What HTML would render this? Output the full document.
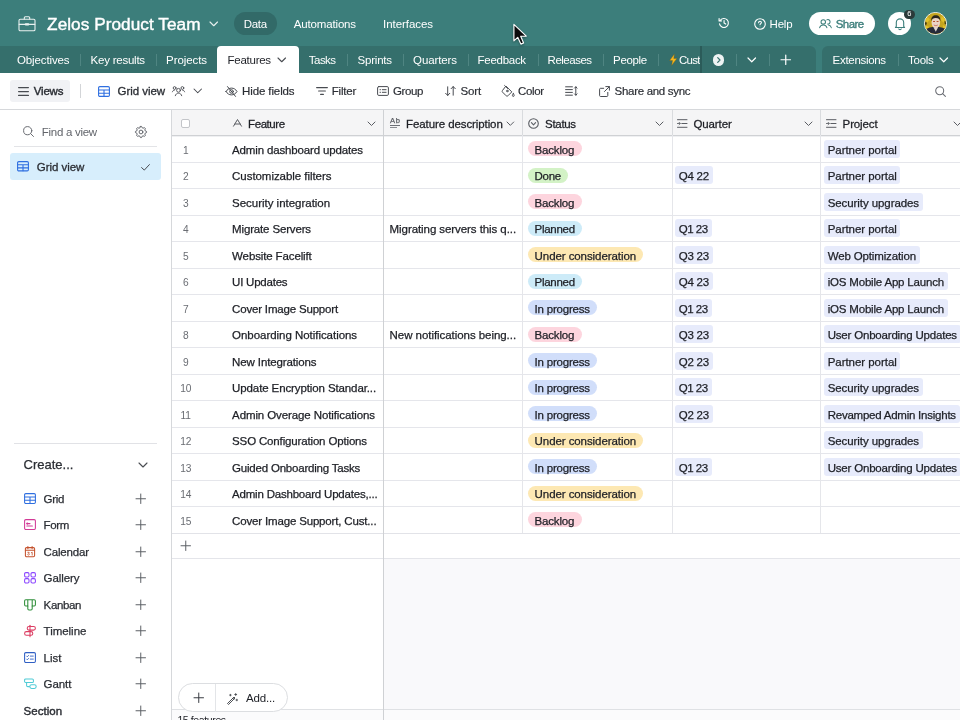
<!DOCTYPE html>
<html>
<head>
<meta charset="utf-8">
<title>Zelos Product Team - Features</title>
<style>
*{box-sizing:border-box;margin:0;padding:0}
html,body{width:960px;height:720px;overflow:hidden;background:#fff}
body{font-family:"Liberation Sans",sans-serif;font-size:11.5px;color:#1d1f25;position:relative}
.a{position:absolute;display:block}
.x{position:absolute;white-space:nowrap;font-family:"Liberation Sans",sans-serif}
svg{overflow:visible}
#w{position:absolute;left:0;top:0;width:960px;height:720px;overflow:hidden;will-change:transform;background:#fff}
</style>
</head>
<body>
<div id="w">

<!-- TOP BAR + TABS -->
<div class="a" style="left:0px;top:0px;width:960.00px;height:73.00px;background:#3c7e7b;"></div>
<div class="a" style="left:0px;top:46px;width:816.00px;height:27.00px;background:#356f6c;border-top-right-radius:6px;"></div>
<div class="a" style="left:822px;top:46px;width:138.00px;height:27.00px;background:#356f6c;border-top-left-radius:6px;"></div>
<svg class="a" style="left:17.5px;top:15px;" width="18" height="17" viewBox="0 0 18 17" fill="none" stroke="#e9f1f0" stroke-width="1.1" stroke-linecap="round" stroke-linejoin="round"><rect x="1" y="4.2" width="16" height="11.6" rx="1.3"/><path d="M6.300 4V2.700c0-.6.4-1 1-1h3.400c.6 0 1 .4 1 1V4"/><path d="M1.200 9.400h15.600"/><path d="M7.800 9.400h2.400" stroke-width="2.200"/></svg>
<div class="x" style="left:47.10px;top:16.11px;font-size:17.2px;line-height:16px;letter-spacing:0.051px;color:#ffffff;-webkit-text-stroke:0.4px #ffffff;">Zelos Product Team</div>
<svg class="a" style="left:210.25px;top:21.825px;" width="7.5" height="3.75" viewBox="0 0 7.5 3.75" fill="none" stroke="#e6eeed" stroke-width="1.15" stroke-linecap="round" stroke-linejoin="round"><path d="M0 0L3.75 3.75L7.5 0"/></svg>
<div class="a" style="left:234px;top:11.5px;width:43.00px;height:23.50px;background:#326a68;border-radius:12px;"></div>
<div class="x" style="left:243.80px;top:15.71px;font-size:11.5px;line-height:16px;letter-spacing:-0.330px;color:#ffffff;">Data</div>
<div class="x" style="left:293.80px;top:15.71px;font-size:11.5px;line-height:16px;letter-spacing:-0.162px;color:#ffffff;">Automations</div>
<div class="x" style="left:383.10px;top:15.71px;font-size:11.5px;line-height:16px;letter-spacing:-0.055px;color:#ffffff;">Interfaces</div>
<svg class="a" style="left:718.2px;top:17.3px;" width="11.8" height="11.8" viewBox="0 0 14 14" fill="none" stroke="#ffffff" stroke-width="1.35" stroke-linecap="round" stroke-linejoin="round"><path d="M2.500 4.300A5.300 5.300 0 1 1 1.800 8.200"/><path d="M1.300 1.800v2.800h2.800"/><path d="M7.200 4.300V7.200l2 1.200"/></svg>
<svg class="a" style="left:753.5px;top:17.5px;" width="12" height="12" viewBox="0 0 12 12" fill="none" stroke="#ffffff" stroke-width="1.1" stroke-linecap="round" stroke-linejoin="round"><circle cx="6" cy="6" r="5.300"/><path d="M4.600 4.700c0-.9.600-1.400 1.400-1.400s1.400.5 1.400 1.300c0 1-1.400 1.100-1.400 2.200"/><circle cx="6" cy="8.800" r=".4" fill="#fff" stroke="none"/></svg>
<div class="x" style="left:769.60px;top:15.71px;font-size:11.5px;line-height:16px;letter-spacing:-0.217px;color:#ffffff;">Help</div>
<div class="a" style="left:809px;top:11.5px;width:65.50px;height:23.50px;background:#ffffff;border-radius:12px;"></div>
<svg class="a" style="left:819px;top:18.7px;" width="13" height="9.5" viewBox="0 0 14 10" fill="none" stroke="#3c7e7b" stroke-width="1.1" stroke-linecap="round" stroke-linejoin="round"><circle cx="4.600" cy="3" r="2.400"/><path d="M.700 9.300c.5-1.900 2-3 3.900-3s3.400 1.100 3.900 3"/><path d="M8.400.8a2.400 2.400 0 1 1 .9 4.500"/><path d="M10.300 6.300c1.500.2 2.600 1.300 3 3"/></svg>
<div class="x" style="left:835.80px;top:15.71px;font-size:11.5px;line-height:16px;letter-spacing:-0.596px;color:#3c7e7b;-webkit-text-stroke:0.35px #3c7e7b;">Share</div>
<div class="a" style="left:887.5px;top:11.5px;width:23.50px;height:23.50px;background:#ffffff;border-radius:12px;"></div>
<svg class="a" style="left:893.5px;top:17px;" width="12" height="13" viewBox="0 0 12 13" fill="none" stroke="#3c7e7b" stroke-width="1.1" stroke-linecap="round" stroke-linejoin="round"><path d="M2.300 9.400V5.600a3.700 3.700 0 0 1 7.400 0v3.800l.9 1.100H1.400z"/><path d="M4.700 12c.3.400.8.600 1.300.600s1-.2 1.300-.6"/></svg>
<div class="a" style="left:903.5px;top:9.5px;width:11.00px;height:9.50px;background:#2b3a3a;border-radius:5px;"></div>
<div class="x" style="left:907.30px;top:6.43px;font-size:7.5px;line-height:16px;letter-spacing:-0.120px;color:#ffffff;">6</div>
<div class="a" style="left:923.7px;top:11.5px;width:23.6px;height:23.6px;border-radius:12px;overflow:hidden;border:1px solid #f1f4f3;background:#c4a31d"><svg width="21.6" height="21.6" viewBox="0 0 22 22" style="display:block"><rect width="22" height="22" fill="#c6a51f"/><path d="M0 6l3-2 2 3-3 3zM17 3l4 3-2 4-3-3zM1 13l3 1-1 3-3-1zM18 12l3 2-2 3z" fill="#e0c12a"/><path d="M0 9l2 1-1 3-1-1zM20 8l2 1v3l-2-1z" fill="#3a3413"/><path d="M0 17c3-2 6-3 11-3s8 1 11 3v5H0z" fill="#262b3a"/><path d="M8.600 14.500h4.800l-2.400 4.500z" fill="#ddd5cf"/><ellipse cx="11" cy="9.700" rx="4.300" ry="5.600" fill="#ead3c6"/><path d="M6.300 8.500C6 4.200 8.200 2.300 11 2.300s5 1.900 4.700 6.200c-.5-2.300-1.900-3.300-4.700-3.300s-4.200 1-4.700 3.300z" fill="#2b241c"/><path d="M8.200 8.700h2M11.800 8.700h2" stroke="#b5522d" stroke-width="1.100"/><path d="M9 12.200c1.300.9 2.700.9 4 0" stroke="#c46a5a" stroke-width=".9" fill="none"/></svg></div>
<div class="x" style="left:16.90px;top:51.81px;font-size:11.5px;line-height:16px;letter-spacing:-0.109px;color:#ffffff;">Objectives</div>
<div class="a" style="left:80px;top:53.5px;width:1.00px;height:12.50px;background:#4f8582;"></div>
<div class="x" style="left:90.60px;top:51.81px;font-size:11.5px;line-height:16px;letter-spacing:-0.238px;color:#ffffff;">Key results</div>
<div class="a" style="left:155.5px;top:53.5px;width:1.00px;height:12.50px;background:#4f8582;"></div>
<div class="x" style="left:166.10px;top:51.81px;font-size:11.5px;line-height:16px;letter-spacing:-0.077px;color:#ffffff;">Projects</div>
<div class="a" style="left:217px;top:46px;width:81.50px;height:27.00px;background:#ffffff;border-radius:4px 4px 0 0;"></div>
<div class="x" style="left:227.60px;top:51.81px;font-size:11.5px;line-height:16px;letter-spacing:-0.268px;color:#1d1f25;">Features</div>
<svg class="a" style="left:277.95px;top:58.125px;" width="7.5" height="3.75" viewBox="0 0 7.5 3.75" fill="none" stroke="#4a4d52" stroke-width="1.1" stroke-linecap="round" stroke-linejoin="round"><path d="M0 0L3.75 3.75L7.5 0"/></svg>
<div class="x" style="left:308.80px;top:51.81px;font-size:11.5px;line-height:16px;letter-spacing:-0.524px;color:#ffffff;">Tasks</div>
<div class="a" style="left:347px;top:53.5px;width:1.00px;height:12.50px;background:#4f8582;"></div>
<div class="x" style="left:357.60px;top:51.81px;font-size:11.5px;line-height:16px;letter-spacing:-0.215px;color:#ffffff;">Sprints</div>
<div class="a" style="left:403px;top:53.5px;width:1.00px;height:12.50px;background:#4f8582;"></div>
<div class="x" style="left:413.10px;top:51.81px;font-size:11.5px;line-height:16px;letter-spacing:-0.105px;color:#ffffff;">Quarters</div>
<div class="a" style="left:468px;top:53.5px;width:1.00px;height:12.50px;background:#4f8582;"></div>
<div class="x" style="left:477.60px;top:51.81px;font-size:11.5px;line-height:16px;letter-spacing:-0.286px;color:#ffffff;">Feedback</div>
<div class="a" style="left:538px;top:53.5px;width:1.00px;height:12.50px;background:#4f8582;"></div>
<div class="x" style="left:547.60px;top:51.81px;font-size:11.5px;line-height:16px;letter-spacing:-0.492px;color:#ffffff;">Releases</div>
<div class="a" style="left:602.5px;top:53.5px;width:1.00px;height:12.50px;background:#4f8582;"></div>
<div class="x" style="left:613.10px;top:51.81px;font-size:11.5px;line-height:16px;letter-spacing:-0.361px;color:#ffffff;">People</div>
<div class="a" style="left:657.5px;top:53.5px;width:1.00px;height:12.50px;background:#4f8582;"></div>
<svg class="a" style="left:669px;top:54.2px;" width="8.5" height="11.5" viewBox="0 0 9 12" fill="none" ><path d="M5.700 0L.6 6.900h3.100L2.800 12l5.600-7.400H5.100z" fill="#f7b71d" stroke="#6b5a1e" stroke-width=".4"/></svg>
<div class="x" style="left:678.90px;top:51.81px;font-size:11.5px;line-height:16px;letter-spacing:-0.715px;color:#ffffff;">Cust</div>
<div class="a" style="left:700px;top:46px;width:1.50px;height:27.00px;background:#2b5b59;"></div>
<div class="a" style="left:712.5px;top:54px;width:11.50px;height:11.50px;background:#eef3f3;border-radius:6px;"></div>
<svg class="a" style="left:716.7px;top:57px;" width="4" height="6" viewBox="0 0 4 6" fill="none" stroke="#356f6c" stroke-width="1.2" stroke-linecap="round" stroke-linejoin="round"><path d="M.7.700L3 3 .7 5.300"/></svg>
<div class="a" style="left:735.5px;top:53.5px;width:1.00px;height:12.50px;background:#4f8582;"></div>
<svg class="a" style="left:748.45px;top:58.125px;" width="7.5" height="3.75" viewBox="0 0 7.5 3.75" fill="none" stroke="#ffffff" stroke-width="1.2" stroke-linecap="round" stroke-linejoin="round"><path d="M0 0L3.75 3.75L7.5 0"/></svg>
<div class="a" style="left:769px;top:53.5px;width:1.00px;height:12.50px;background:#4f8582;"></div>
<svg class="a" style="left:781.25px;top:54.95px;" width="9.5" height="9.5" viewBox="0 0 9.5 9.5" fill="none" stroke="#ffffff" stroke-width="1.2" stroke-linecap="round" stroke-linejoin="round"><path d="M4.75 0V9.5M0 4.75H9.5"/></svg>
<div class="x" style="left:832.60px;top:51.81px;font-size:11.5px;line-height:16px;letter-spacing:-0.306px;color:#ffffff;">Extensions</div>
<div class="a" style="left:897.5px;top:53.5px;width:1.00px;height:12.50px;background:#4f8582;"></div>
<div class="x" style="left:908.10px;top:51.81px;font-size:11.5px;line-height:16px;letter-spacing:-0.286px;color:#ffffff;">Tools</div>
<svg class="a" style="left:939.95px;top:58.125px;" width="7.5" height="3.75" viewBox="0 0 7.5 3.75" fill="none" stroke="#ffffff" stroke-width="1.2" stroke-linecap="round" stroke-linejoin="round"><path d="M0 0L3.75 3.75L7.5 0"/></svg>
<svg class="a" style="left:513.4px;top:23.2px;filter:drop-shadow(0 1px 1px rgba(0,0,0,.35));" width="15" height="23" viewBox="0 0 15 23" fill="none" ><path d="M.9 1.300L.9 17.800L4.700 14.300L7.900 21.100L10.600 19.900L7.700 13.300L13.300 13.100z" fill="#0b0b0c" stroke="#ffffff" stroke-width="1.150" stroke-linejoin="round"/></svg>
<!-- TOOLBAR -->
<div class="a" style="left:0px;top:73px;width:960.00px;height:36.00px;background:#ffffff;"></div>
<div class="a" style="left:0px;top:109px;width:960.00px;height:1.00px;background:#d6d8db;"></div>
<div class="a" style="left:10px;top:80px;width:60.00px;height:22.00px;background:#f1f2f5;border-radius:3px;"></div>
<svg class="a" style="left:18px;top:86.5px;" width="11" height="9" viewBox="0 0 11 9" fill="none" stroke="#484b51" stroke-width="1.25" stroke-linecap="round" stroke-linejoin="round"><path d="M.6.600h9.800M.6 4.500h9.800M.6 8.400h9.800"/></svg>
<div class="x" style="left:33.80px;top:83.21px;font-size:11.5px;line-height:16px;letter-spacing:-0.217px;color:#2b2e34;-webkit-text-stroke:0.4px #2b2e34;">Views</div>
<div class="a" style="left:80px;top:84px;width:1.00px;height:14.00px;background:#d3d5d8;"></div>
<svg class="a" style="left:98px;top:85.5px;" width="12" height="11" viewBox="0 0 12 11" fill="none" stroke="#2f6fe0" stroke-width="1.1" stroke-linecap="round" stroke-linejoin="round"><rect x=".6" y=".6" width="10.800" height="9.800" rx="1.200"/><path d="M.6 4h10.800M.6 7.200h10.800M6 4v6.400"/></svg>
<div class="x" style="left:117.60px;top:83.21px;font-size:11.5px;line-height:16px;letter-spacing:-0.053px;color:#2b2e34;-webkit-text-stroke:0.3px #2b2e34;">Grid view</div>
<svg class="a" style="left:172px;top:86px;" width="13" height="10" viewBox="0 0 13 10" fill="none" stroke="#484b51" stroke-width="0.9" stroke-linecap="round" stroke-linejoin="round"><circle cx="6.500" cy="4.300" r="1.900"/><path d="M3.300 9.700c.4-1.600 1.600-2.500 3.200-2.500s2.800.9 3.200 2.500"/><circle cx="2.600" cy="2" r="1.400"/><path d="M.4 5.800c.3-1 1-1.600 2-1.700"/><circle cx="10.400" cy="2" r="1.400"/><path d="M12.600 5.800c-.3-1-1-1.600-2-1.700"/></svg>
<svg class="a" style="left:194.25px;top:89.425px;" width="7.5" height="3.75" viewBox="0 0 7.5 3.75" fill="none" stroke="#484b51" stroke-width="1.05" stroke-linecap="round" stroke-linejoin="round"><path d="M0 0L3.75 3.75L7.5 0"/></svg>
<svg class="a" style="left:225px;top:85.5px;" width="13" height="11" viewBox="0 0 13 11" fill="none" stroke="#484b51" stroke-width="1.0" stroke-linecap="round" stroke-linejoin="round"><path d="M1 5.500C2.300 3.300 4.200 2.100 6.500 2.100S10.700 3.300 12 5.500C10.700 7.700 8.800 8.900 6.500 8.900S2.300 7.700 1 5.500z"/><circle cx="6.500" cy="5.500" r="1.800"/><path d="M2.500.600l8 9.800"/></svg>
<div class="x" style="left:242.10px;top:83.21px;font-size:11.5px;line-height:16px;letter-spacing:-0.119px;color:#2b2e34;-webkit-text-stroke:0.18px #2b2e34;">Hide fields</div>
<svg class="a" style="left:315.5px;top:87px;" width="12" height="8" viewBox="0 0 12 8" fill="none" stroke="#484b51" stroke-width="1.1" stroke-linecap="round" stroke-linejoin="round"><path d="M.6.600h10.800M2.600 4h6.800M4.600 7.400h2.800"/></svg>
<div class="x" style="left:331.80px;top:83.21px;font-size:11.5px;line-height:16px;letter-spacing:-0.211px;color:#2b2e34;-webkit-text-stroke:0.18px #2b2e34;">Filter</div>
<svg class="a" style="left:377px;top:86px;" width="12" height="10" viewBox="0 0 12 10" fill="none" stroke="#484b51" stroke-width="1.0" stroke-linecap="round" stroke-linejoin="round"><rect x=".6" y=".6" width="10.800" height="8.800" rx="1.200"/><path d="M3 3.700h.5M5.300 3.700h3.800M3 6.300h.5M5.300 6.300h3.800"/></svg>
<div class="x" style="left:393.10px;top:83.21px;font-size:11.5px;line-height:16px;letter-spacing:-0.440px;color:#2b2e34;-webkit-text-stroke:0.18px #2b2e34;">Group</div>
<svg class="a" style="left:445px;top:86px;" width="11" height="10" viewBox="0 0 11 10" fill="none" stroke="#484b51" stroke-width="1.0" stroke-linecap="round" stroke-linejoin="round"><path d="M2.700 9.400V.8M.6 7.300l2.100 2.100 2.100-2.100M8.200.600v8.600M6.100 2.700L8.200.6l2.100 2.100"/></svg>
<div class="x" style="left:460.60px;top:83.21px;font-size:11.5px;line-height:16px;letter-spacing:-0.197px;color:#2b2e34;-webkit-text-stroke:0.18px #2b2e34;">Sort</div>
<svg class="a" style="left:501px;top:85px;" width="14" height="12" viewBox="0 0 14 12" fill="none" stroke="#484b51" stroke-width="1.0" stroke-linecap="round" stroke-linejoin="round"><path d="M5.200 1.300l5.600 5.600-3.900 3.900c-.5.500-1.200.5-1.700 0L1.500 7.100c-.5-.5-.5-1.200 0-1.700z"/><path d="M3.600.500l3 3"/><circle cx="6.300" cy="6" r=".8"/><path d="M12.300 8.600c.6.900.9 1.500.9 1.900a.9.900 0 0 1-1.800 0c0-.4.300-1 .9-1.900z"/></svg>
<div class="x" style="left:518.10px;top:83.21px;font-size:11.5px;line-height:16px;letter-spacing:-0.370px;color:#2b2e34;-webkit-text-stroke:0.18px #2b2e34;">Color</div>
<svg class="a" style="left:565px;top:86px;" width="13" height="10" viewBox="0 0 13 10" fill="none" stroke="#484b51" stroke-width="1.0" stroke-linecap="round" stroke-linejoin="round"><path d="M.6.800h6.800M.6 3.600h6.800M.6 6.400h6.800M.6 9.200h6.800"/><path d="M10.800.800v8.400M9.500 2.100L10.800.8l1.300 1.300M9.500 7.900l1.300 1.300 1.300-1.300"/></svg>
<svg class="a" style="left:598.5px;top:85.5px;" width="11" height="11" viewBox="0 0 11 11" fill="none" stroke="#484b51" stroke-width="1.0" stroke-linecap="round" stroke-linejoin="round"><path d="M8.800 6.400v3.200c0 .5-.4.900-.9.900H1.500c-.5 0-.9-.4-.9-.9V3.200c0-.5.400-.9.900-.9h3.200"/><path d="M6.800.600h3.600v3.600M10.300.7L5.500 5.500"/></svg>
<div class="x" style="left:614.60px;top:83.21px;font-size:11.5px;line-height:16px;letter-spacing:-0.300px;color:#2b2e34;-webkit-text-stroke:0.18px #2b2e34;">Share and sync</div>
<svg class="a" style="left:935.3px;top:85.8px;" width="11" height="11" viewBox="0 0 11 11" fill="none" stroke="#6a6d73" stroke-width="1.05" stroke-linecap="round" stroke-linejoin="round"><circle cx="4.700" cy="4.700" r="4"/><path d="M7.600 7.600l2.800 2.800"/></svg>
<!-- SIDEBAR -->
<div class="a" style="left:0px;top:110px;width:171.00px;height:610.00px;background:#ffffff;"></div>
<div class="a" style="left:171px;top:110px;width:1.00px;height:610.00px;background:#d6d8db;"></div>
<svg class="a" style="left:22.6px;top:125.8px;" width="11" height="11" viewBox="0 0 11 11" fill="none" stroke="#6a6d73" stroke-width="1.0" stroke-linecap="round" stroke-linejoin="round"><circle cx="4.700" cy="4.700" r="4.100"/><path d="M7.700 7.700l2.800 2.800"/></svg>
<div class="x" style="left:41.80px;top:124.21px;font-size:11.5px;line-height:16px;letter-spacing:-0.286px;color:#62656b;">Find a view</div>
<svg class="a" style="left:135.2px;top:125.6px;" width="12" height="12" viewBox="0 0 12 12" fill="none" stroke="#5d6066" stroke-width="0.95" stroke-linecap="round" stroke-linejoin="round"><path d="M5.45 0.43L6.55 0.43L7.25 1.89L8.03 2.21L9.55 1.67L10.33 2.45L9.79 3.97L10.11 4.75L11.57 5.45L11.57 6.55L10.11 7.25L9.79 8.03L10.33 9.55L9.55 10.33L8.03 9.79L7.25 10.11L6.55 11.57L5.45 11.57L4.75 10.11L3.97 9.79L2.45 10.33L1.67 9.55L2.21 8.03L1.89 7.25L0.43 6.55L0.43 5.45L1.89 4.75L2.21 3.97L1.67 2.45L2.45 1.67L3.97 2.21L4.75 1.89z"/><circle cx="6" cy="6" r="1.900"/></svg>
<div class="a" style="left:13.5px;top:145.5px;width:143.50px;height:1.00px;background:#e3e4e7;"></div>
<div class="a" style="left:10px;top:153px;width:150.50px;height:26.60px;background:#d7eefc;border-radius:3px;"></div>
<svg class="a" style="left:17px;top:161px;" width="12" height="10.5" viewBox="0 0 12 10.5" fill="none" stroke="#2f6fe0" stroke-width="1.1" stroke-linecap="round" stroke-linejoin="round"><rect x=".6" y=".6" width="10.800" height="9.300" rx="1.200"/><path d="M.6 3.800h10.800M.6 6.900h10.800M6 3.800v6"/></svg>
<div class="x" style="left:36.80px;top:158.71px;font-size:11.5px;line-height:16px;letter-spacing:-0.041px;color:#2b2e34;-webkit-text-stroke:0.3px #2b2e34;">Grid view</div>
<svg class="a" style="left:140.5px;top:163.5px;" width="9" height="6.5" viewBox="0 0 9 6.5" fill="none" stroke="#4a4d52" stroke-width="1.0" stroke-linecap="round" stroke-linejoin="round"><path d="M.6 3.600l2.700 2.500L8.400.6"/></svg>
<div class="a" style="left:13.5px;top:443px;width:143.50px;height:1.00px;background:#e1e2e6;"></div>
<div class="x" style="left:23.50px;top:457.23px;font-size:13px;line-height:16px;letter-spacing:0.006px;color:#2b2e34;-webkit-text-stroke:0.25px #2b2e34;">Create...</div>
<svg class="a" style="left:138.5px;top:462.5px;" width="8" height="4.0" viewBox="0 0 8 4.0" fill="none" stroke="#4a4d52" stroke-width="1.1" stroke-linecap="round" stroke-linejoin="round"><path d="M0 0L4.0 4.0L8 0"/></svg>
<svg class="a" style="left:24px;top:492.8px;" width="12" height="11.5" viewBox="0 0 12 11.5" fill="none" stroke="#2f6fe0" stroke-width="1.05" stroke-linecap="round" stroke-linejoin="round"><rect x=".6" y=".6" width="10.800" height="9.800" rx="1.200"/><path d="M.6 4h10.800M.6 7.200h10.800M6 4v6.400"/></svg>
<div class="x" style="left:43.60px;top:490.71px;font-size:11.5px;line-height:16px;letter-spacing:-0.308px;color:#2b2e34;-webkit-text-stroke:0.25px #2b2e34;">Grid</div>
<svg class="a" style="left:135.75px;top:493.75px;" width="9.5" height="9.5" viewBox="0 0 9.5 9.5" fill="none" stroke="#5d6066" stroke-width="1.0" stroke-linecap="round" stroke-linejoin="round"><path d="M4.75 0V9.5M0 4.75H9.5"/></svg>
<svg class="a" style="left:24px;top:519.3px;" width="12" height="11.5" viewBox="0 0 12 11.5" fill="none" stroke="#d23a96" stroke-width="1.05" stroke-linecap="round" stroke-linejoin="round"><rect x=".6" y=".6" width="10.800" height="9.800" rx="1.200"/><path d="M2.800 4.600h3.200M2.800 7h5.600"/><circle cx="3.300" cy="4.600" r=".5"/></svg>
<div class="x" style="left:43.60px;top:517.21px;font-size:11.5px;line-height:16px;letter-spacing:-0.342px;color:#2b2e34;-webkit-text-stroke:0.25px #2b2e34;">Form</div>
<svg class="a" style="left:135.75px;top:520.25px;" width="9.5" height="9.5" viewBox="0 0 9.5 9.5" fill="none" stroke="#5d6066" stroke-width="1.0" stroke-linecap="round" stroke-linejoin="round"><path d="M4.75 0V9.5M0 4.75H9.5"/></svg>
<svg class="a" style="left:24px;top:545.8px;" width="12" height="11.5" viewBox="0 0 12 11.5" fill="none" stroke="#c4522d" stroke-width="1.05" stroke-linecap="round" stroke-linejoin="round"><rect x="1.400" y="1.600" width="9.200" height="9.200" rx="1.200"/><path d="M1.400 4.200h9.200M3.900.4v2.200M8.100.4v2.200"/><path d="M3.800 6.300h1.400l-.8 1c.7 0 1 .4 1 .9 0 .6-.5.900-1 .9-.4 0-.7-.1-.9-.4M7.300 6.700l.9-.5v2.900" stroke-width=".8"/></svg>
<div class="x" style="left:43.60px;top:543.71px;font-size:11.5px;line-height:16px;letter-spacing:-0.166px;color:#2b2e34;-webkit-text-stroke:0.25px #2b2e34;">Calendar</div>
<svg class="a" style="left:135.75px;top:546.75px;" width="9.5" height="9.5" viewBox="0 0 9.5 9.5" fill="none" stroke="#5d6066" stroke-width="1.0" stroke-linecap="round" stroke-linejoin="round"><path d="M4.75 0V9.5M0 4.75H9.5"/></svg>
<svg class="a" style="left:24px;top:572.3px;" width="12" height="11.5" viewBox="0 0 12 11.5" fill="none" stroke="#8b46ff" stroke-width="1.05" stroke-linecap="round" stroke-linejoin="round"><rect x=".6" y=".6" width="4.400" height="4.400" rx="1.300"/><rect x="7" y=".6" width="4.400" height="4.400" rx="1.300"/><rect x=".6" y="6.600" width="4.400" height="4.400" rx="1.300"/><rect x="7" y="6.600" width="4.400" height="4.400" rx="1.300"/></svg>
<div class="x" style="left:43.60px;top:570.21px;font-size:11.5px;line-height:16px;letter-spacing:-0.104px;color:#2b2e34;-webkit-text-stroke:0.25px #2b2e34;">Gallery</div>
<svg class="a" style="left:135.75px;top:573.25px;" width="9.5" height="9.5" viewBox="0 0 9.5 9.5" fill="none" stroke="#5d6066" stroke-width="1.0" stroke-linecap="round" stroke-linejoin="round"><path d="M4.75 0V9.5M0 4.75H9.5"/></svg>
<svg class="a" style="left:24px;top:598.8px;" width="12" height="11.5" viewBox="0 0 12 11.5" fill="none" stroke="#2f8f3a" stroke-width="1.05" stroke-linecap="round" stroke-linejoin="round"><path d="M1.800.8h8.400c.7 0 1.200.5 1.200 1.200v3.800c0 .7-.5 1.200-1.200 1.200H8.200V.8M3.800.8V7H1.800C1.100 7 .6 6.500.6 5.800V2C.6 1.300 1.100.8 1.800.8z"/><path d="M3.800 7v2.800c0 .7.5 1.200 1.200 1.200h2c.7 0 1.200-.5 1.200-1.200V7"/></svg>
<div class="x" style="left:43.60px;top:596.71px;font-size:11.5px;line-height:16px;letter-spacing:-0.369px;color:#2b2e34;-webkit-text-stroke:0.25px #2b2e34;">Kanban</div>
<svg class="a" style="left:135.75px;top:599.75px;" width="9.5" height="9.5" viewBox="0 0 9.5 9.5" fill="none" stroke="#5d6066" stroke-width="1.0" stroke-linecap="round" stroke-linejoin="round"><path d="M4.75 0V9.5M0 4.75H9.5"/></svg>
<svg class="a" style="left:24px;top:625.3px;" width="12" height="11.5" viewBox="0 0 12 11.5" fill="none" stroke="#dc3d62" stroke-width="1.05" stroke-linecap="round" stroke-linejoin="round"><path d="M6 .3v11.400"/><rect x="3.200" y="1.500" width="8.200" height="3.600" rx="1.800"/><rect x=".6" y="6.600" width="8.200" height="3.600" rx="1.800"/></svg>
<div class="x" style="left:43.60px;top:623.21px;font-size:11.5px;line-height:16px;letter-spacing:-0.033px;color:#2b2e34;-webkit-text-stroke:0.25px #2b2e34;">Timeline</div>
<svg class="a" style="left:135.75px;top:626.25px;" width="9.5" height="9.5" viewBox="0 0 9.5 9.5" fill="none" stroke="#5d6066" stroke-width="1.0" stroke-linecap="round" stroke-linejoin="round"><path d="M4.75 0V9.5M0 4.75H9.5"/></svg>
<svg class="a" style="left:24px;top:651.8px;" width="12" height="11.5" viewBox="0 0 12 11.5" fill="none" stroke="#2f5fc4" stroke-width="1.05" stroke-linecap="round" stroke-linejoin="round"><rect x=".6" y=".6" width="10.800" height="9.800" rx="1.200"/><path d="M2.600 4.100l.7.700 1.200-1.300M6.300 4.100h3M2.600 7.100l.7.700 1.200-1.300M6.300 7.100h3" stroke-width=".9"/></svg>
<div class="x" style="left:43.60px;top:649.71px;font-size:11.5px;line-height:16px;letter-spacing:-0.032px;color:#2b2e34;-webkit-text-stroke:0.25px #2b2e34;">List</div>
<svg class="a" style="left:135.75px;top:652.75px;" width="9.5" height="9.5" viewBox="0 0 9.5 9.5" fill="none" stroke="#5d6066" stroke-width="1.0" stroke-linecap="round" stroke-linejoin="round"><path d="M4.75 0V9.5M0 4.75H9.5"/></svg>
<svg class="a" style="left:24px;top:678.3px;" width="12" height="11.5" viewBox="0 0 12 11.5" fill="none" stroke="#4fcbd6" stroke-width="1.05" stroke-linecap="round" stroke-linejoin="round"><rect x=".6" y=".9" width="8.800" height="3.600" rx="1.100"/><rect x="5.800" y="6.800" width="6.400" height="3.600" rx="1.800"/><path d="M2.600 4.500v2.900c0 .7.500 1.200 1.200 1.200h1.600"/></svg>
<div class="x" style="left:43.60px;top:676.21px;font-size:11.5px;line-height:16px;letter-spacing:-0.081px;color:#2b2e34;-webkit-text-stroke:0.25px #2b2e34;">Gantt</div>
<svg class="a" style="left:135.75px;top:679.25px;" width="9.5" height="9.5" viewBox="0 0 9.5 9.5" fill="none" stroke="#5d6066" stroke-width="1.0" stroke-linecap="round" stroke-linejoin="round"><path d="M4.75 0V9.5M0 4.75H9.5"/></svg>
<div class="x" style="left:23.50px;top:702.71px;font-size:11.5px;line-height:16px;letter-spacing:0.041px;color:#2b2e34;-webkit-text-stroke:0.4px #2b2e34;">Section</div>
<svg class="a" style="left:135.75px;top:705.75px;" width="9.5" height="9.5" viewBox="0 0 9.5 9.5" fill="none" stroke="#5d6066" stroke-width="1.0" stroke-linecap="round" stroke-linejoin="round"><path d="M4.75 0V9.5M0 4.75H9.5"/></svg>
<!-- GRID -->
<div class="a" style="left:172px;top:110px;width:788.00px;height:610.00px;background:#f9f9fb;"></div>
<div class="a" style="left:172px;top:110px;width:211.00px;height:610.00px;background:#ffffff;"></div>
<div class="a" style="left:172px;top:110px;width:788.00px;height:25.00px;background:#f5f5f6;"></div>
<div class="a" style="left:172px;top:135px;width:788.00px;height:423.00px;background:#ffffff;"></div>
<div class="a" style="left:172px;top:135px;width:788.00px;height:1.00px;background:#cfd1d4;"></div>
<div class="a" style="left:172px;top:136px;width:788.00px;height:1.00px;background:#eff0f2;"></div>
<div class="a" style="left:172px;top:162px;width:788.00px;height:1.00px;background:#e5e6eb;"></div>
<div class="a" style="left:172px;top:188px;width:788.00px;height:1.00px;background:#e5e6eb;"></div>
<div class="a" style="left:172px;top:215px;width:788.00px;height:1.00px;background:#e5e6eb;"></div>
<div class="a" style="left:172px;top:241px;width:788.00px;height:1.00px;background:#e5e6eb;"></div>
<div class="a" style="left:172px;top:268px;width:788.00px;height:1.00px;background:#e5e6eb;"></div>
<div class="a" style="left:172px;top:294px;width:788.00px;height:1.00px;background:#e5e6eb;"></div>
<div class="a" style="left:172px;top:321px;width:788.00px;height:1.00px;background:#e5e6eb;"></div>
<div class="a" style="left:172px;top:347px;width:788.00px;height:1.00px;background:#e5e6eb;"></div>
<div class="a" style="left:172px;top:374px;width:788.00px;height:1.00px;background:#e5e6eb;"></div>
<div class="a" style="left:172px;top:400px;width:788.00px;height:1.00px;background:#e5e6eb;"></div>
<div class="a" style="left:172px;top:427px;width:788.00px;height:1.00px;background:#e5e6eb;"></div>
<div class="a" style="left:172px;top:453px;width:788.00px;height:1.00px;background:#e5e6eb;"></div>
<div class="a" style="left:172px;top:480px;width:788.00px;height:1.00px;background:#e5e6eb;"></div>
<div class="a" style="left:172px;top:506px;width:788.00px;height:1.00px;background:#e5e6eb;"></div>
<div class="a" style="left:172px;top:533px;width:788.00px;height:1.00px;background:#e5e6eb;"></div>
<div class="a" style="left:172px;top:533px;width:788.00px;height:1.00px;background:#e2e3e8;"></div>
<div class="a" style="left:172px;top:558px;width:788.00px;height:1.00px;background:#e4e5ea;"></div>
<div class="a" style="left:383px;top:110px;width:1.00px;height:610.00px;background:#cfd1d4;"></div>
<div class="a" style="left:522px;top:110px;width:1.00px;height:423.00px;background:#e5e6ea;"></div>
<div class="a" style="left:522px;top:110px;width:1.00px;height:25.00px;background:#d9dbde;"></div>
<div class="a" style="left:672px;top:110px;width:1.00px;height:423.00px;background:#e5e6ea;"></div>
<div class="a" style="left:672px;top:110px;width:1.00px;height:25.00px;background:#d9dbde;"></div>
<div class="a" style="left:820px;top:110px;width:1.00px;height:423.00px;background:#e5e6ea;"></div>
<div class="a" style="left:820px;top:110px;width:1.00px;height:25.00px;background:#d9dbde;"></div>
<div class="a" style="left:180.5px;top:118.7px;width:9.30px;height:9.00px;background:#ffffff;border-radius:2px;border:1px solid #c3c5c9;"></div>
<svg class="a" style="left:233px;top:119.3px;" width="9" height="7.5" viewBox="0 0 9 7.5" fill="none" stroke="#5a5d63" stroke-width="1.0" stroke-linecap="round" stroke-linejoin="round"><path d="M.5 7.200L4.500.5l4 6.700M1.900 5h5.200"/></svg>
<div class="x" style="left:248.10px;top:115.51px;font-size:11.5px;line-height:16px;letter-spacing:-0.438px;color:#1d1f25;-webkit-text-stroke:0.26px #1d1f25;">Feature</div>
<svg class="a" style="left:368.2px;top:121.75px;" width="7" height="3.5" viewBox="0 0 7 3.5" fill="none" stroke="#5a5d63" stroke-width="1.0" stroke-linecap="round" stroke-linejoin="round"><path d="M0 0L3.5 3.5L7 0"/></svg>
<div class="x" style="left:390.00px;top:113.14px;font-size:7.6px;line-height:16px;letter-spacing:0.600px;color:#5a5d63;-webkit-text-stroke:0.25px #5a5d63;">Ab</div>
<div class="a" style="left:389.8px;top:124.6px;width:10.40px;height:1.20px;background:#6d7076;"></div>
<div class="a" style="left:389.8px;top:126.7px;width:7.50px;height:0.90px;background:#8a8d92;"></div>
<div class="x" style="left:406.10px;top:115.51px;font-size:11.5px;line-height:16px;letter-spacing:-0.096px;color:#1d1f25;-webkit-text-stroke:0.26px #1d1f25;">Feature description</div>
<svg class="a" style="left:507.34999999999997px;top:121.825px;" width="6.7" height="3.35" viewBox="0 0 6.7 3.35" fill="none" stroke="#5a5d63" stroke-width="1.0" stroke-linecap="round" stroke-linejoin="round"><path d="M0 0L3.35 3.35L6.7 0"/></svg>
<svg class="a" style="left:528.4px;top:118.1px;" width="11" height="11" viewBox="0 0 11 11" fill="none" stroke="#5a5d63" stroke-width="1.1" stroke-linecap="round" stroke-linejoin="round"><circle cx="5.500" cy="5.500" r="4.800"/><path d="M3.400 4.700l2.100 2.100 2.100-2.100"/></svg>
<div class="x" style="left:545.10px;top:115.51px;font-size:11.5px;line-height:16px;letter-spacing:-0.320px;color:#1d1f25;-webkit-text-stroke:0.26px #1d1f25;">Status</div>
<svg class="a" style="left:656.2px;top:121.75px;" width="7" height="3.5" viewBox="0 0 7 3.5" fill="none" stroke="#5a5d63" stroke-width="1.0" stroke-linecap="round" stroke-linejoin="round"><path d="M0 0L3.5 3.5L7 0"/></svg>
<svg class="a" style="left:676.7px;top:119px;" width="10.5" height="9" viewBox="0 0 10.5 9" fill="none" stroke="#5a5d63" stroke-width="1.0" stroke-linecap="round" stroke-linejoin="round"><path d="M.5.700h9.500M4.800 4.500h5.200M.5 8.300h9.500"/><path d="M.4 4.500h2.700M2.100 3.300l1.200 1.200-1.200 1.200" stroke-width=".85"/></svg>
<div class="x" style="left:693.40px;top:115.51px;font-size:11.5px;line-height:16px;letter-spacing:-0.097px;color:#1d1f25;-webkit-text-stroke:0.26px #1d1f25;">Quarter</div>
<svg class="a" style="left:805.0px;top:121.75px;" width="7" height="3.5" viewBox="0 0 7 3.5" fill="none" stroke="#5a5d63" stroke-width="1.0" stroke-linecap="round" stroke-linejoin="round"><path d="M0 0L3.5 3.5L7 0"/></svg>
<svg class="a" style="left:826.3px;top:119px;" width="10.5" height="9" viewBox="0 0 10.5 9" fill="none" stroke="#5a5d63" stroke-width="1.0" stroke-linecap="round" stroke-linejoin="round"><path d="M.5.700h9.500M4.800 4.500h5.200M.5 8.300h9.500"/><path d="M.4 4.500h2.700M2.100 3.300l1.200 1.200-1.200 1.200" stroke-width=".85"/></svg>
<div class="x" style="left:842.60px;top:115.51px;font-size:11.5px;line-height:16px;letter-spacing:-0.132px;color:#1d1f25;-webkit-text-stroke:0.26px #1d1f25;">Project</div>
<svg class="a" style="left:954.0px;top:121.75px;" width="7" height="3.5" viewBox="0 0 7 3.5" fill="none" stroke="#5a5d63" stroke-width="1.0" stroke-linecap="round" stroke-linejoin="round"><path d="M0 0L3.5 3.5L7 0"/></svg>
<div class="x" style="left:182.96px;top:142.58px;font-size:10.2px;line-height:16px;letter-spacing:-0.120px;color:#6a6d73;">1</div>
<div class="x" style="left:232.10px;top:141.56px;font-size:11.5px;line-height:16px;letter-spacing:-0.148px;color:#1d1f25;-webkit-text-stroke:0.25px #1d1f25;">Admin dashboard updates</div>
<div class="a" style="left:528px;top:141px;width:53.60px;height:15.00px;background:#fdd5de;border-radius:7.5px;"></div>
<div class="x" style="left:534.60px;top:141.56px;font-size:11.5px;line-height:16px;letter-spacing:-0.185px;color:#1d1f25;-webkit-text-stroke:0.25px #1d1f25;">Backlog</div>
<div class="a" style="left:824px;top:140px;width:76.20px;height:18.00px;background:#e7ebfb;border-radius:3px;"></div>
<div class="x" style="left:827.70px;top:141.56px;font-size:11.5px;line-height:16px;letter-spacing:-0.044px;color:#1d1f25;-webkit-text-stroke:0.25px #1d1f25;">Partner portal</div>
<div class="x" style="left:182.96px;top:169.08px;font-size:10.2px;line-height:16px;letter-spacing:-0.120px;color:#6a6d73;">2</div>
<div class="x" style="left:232.10px;top:168.06px;font-size:11.5px;line-height:16px;letter-spacing:-0.054px;color:#1d1f25;-webkit-text-stroke:0.25px #1d1f25;">Customizable filters</div>
<div class="a" style="left:528px;top:168px;width:40.30px;height:15.00px;background:#d3f2c6;border-radius:7.5px;"></div>
<div class="x" style="left:534.60px;top:168.06px;font-size:11.5px;line-height:16px;letter-spacing:-0.330px;color:#1d1f25;-webkit-text-stroke:0.25px #1d1f25;">Done</div>
<div class="a" style="left:675px;top:166px;width:38.00px;height:18.00px;background:#e7ebfb;border-radius:3px;"></div>
<div class="x" style="left:678.80px;top:168.06px;font-size:11.5px;line-height:16px;letter-spacing:-0.256px;color:#1d1f25;-webkit-text-stroke:0.25px #1d1f25;">Q4 22</div>
<div class="a" style="left:824px;top:166px;width:76.20px;height:18.00px;background:#e7ebfb;border-radius:3px;"></div>
<div class="x" style="left:827.70px;top:168.06px;font-size:11.5px;line-height:16px;letter-spacing:-0.044px;color:#1d1f25;-webkit-text-stroke:0.25px #1d1f25;">Partner portal</div>
<div class="x" style="left:182.96px;top:195.58px;font-size:10.2px;line-height:16px;letter-spacing:-0.120px;color:#6a6d73;">3</div>
<div class="x" style="left:232.10px;top:194.56px;font-size:11.5px;line-height:16px;letter-spacing:-0.023px;color:#1d1f25;-webkit-text-stroke:0.25px #1d1f25;">Security integration</div>
<div class="a" style="left:528px;top:194px;width:53.60px;height:15.00px;background:#fdd5de;border-radius:7.5px;"></div>
<div class="x" style="left:534.60px;top:194.56px;font-size:11.5px;line-height:16px;letter-spacing:-0.185px;color:#1d1f25;-webkit-text-stroke:0.25px #1d1f25;">Backlog</div>
<div class="a" style="left:824px;top:193px;width:98.50px;height:18.00px;background:#e7ebfb;border-radius:3px;"></div>
<div class="x" style="left:827.70px;top:194.56px;font-size:11.5px;line-height:16px;letter-spacing:-0.080px;color:#1d1f25;-webkit-text-stroke:0.25px #1d1f25;">Security upgrades</div>
<div class="x" style="left:182.96px;top:222.08px;font-size:10.2px;line-height:16px;letter-spacing:-0.120px;color:#6a6d73;">4</div>
<div class="x" style="left:232.10px;top:221.06px;font-size:11.5px;line-height:16px;letter-spacing:-0.154px;color:#1d1f25;-webkit-text-stroke:0.25px #1d1f25;">Migrate Servers</div>
<div class="x" style="left:389.60px;top:221.06px;font-size:11.5px;line-height:16px;letter-spacing:-0.075px;color:#1d1f25;-webkit-text-stroke:0.25px #1d1f25;">Migrating servers this q...</div>
<div class="a" style="left:528px;top:221px;width:54.30px;height:15.00px;background:#cdebf8;border-radius:7.5px;"></div>
<div class="x" style="left:534.60px;top:221.06px;font-size:11.5px;line-height:16px;letter-spacing:-0.284px;color:#1d1f25;-webkit-text-stroke:0.25px #1d1f25;">Planned</div>
<div class="a" style="left:675px;top:219px;width:37.00px;height:18.00px;background:#e7ebfb;border-radius:3px;"></div>
<div class="x" style="left:678.80px;top:221.06px;font-size:11.5px;line-height:16px;letter-spacing:-0.506px;color:#1d1f25;-webkit-text-stroke:0.25px #1d1f25;">Q1 23</div>
<div class="a" style="left:824px;top:219px;width:76.20px;height:18.00px;background:#e7ebfb;border-radius:3px;"></div>
<div class="x" style="left:827.70px;top:221.06px;font-size:11.5px;line-height:16px;letter-spacing:-0.044px;color:#1d1f25;-webkit-text-stroke:0.25px #1d1f25;">Partner portal</div>
<div class="x" style="left:182.96px;top:248.58px;font-size:10.2px;line-height:16px;letter-spacing:-0.120px;color:#6a6d73;">5</div>
<div class="x" style="left:232.10px;top:247.56px;font-size:11.5px;line-height:16px;letter-spacing:-0.126px;color:#1d1f25;-webkit-text-stroke:0.25px #1d1f25;">Website Facelift</div>
<div class="a" style="left:528px;top:247px;width:115.30px;height:15.00px;background:#fde8b3;border-radius:7.5px;"></div>
<div class="x" style="left:534.60px;top:247.56px;font-size:11.5px;line-height:16px;letter-spacing:-0.079px;color:#1d1f25;-webkit-text-stroke:0.25px #1d1f25;">Under consideration</div>
<div class="a" style="left:675px;top:246px;width:38.00px;height:18.00px;background:#e7ebfb;border-radius:3px;"></div>
<div class="x" style="left:678.80px;top:247.56px;font-size:11.5px;line-height:16px;letter-spacing:-0.256px;color:#1d1f25;-webkit-text-stroke:0.25px #1d1f25;">Q3 23</div>
<div class="a" style="left:824px;top:246px;width:95.50px;height:18.00px;background:#e7ebfb;border-radius:3px;"></div>
<div class="x" style="left:827.70px;top:247.56px;font-size:11.5px;line-height:16px;letter-spacing:-0.143px;color:#1d1f25;-webkit-text-stroke:0.25px #1d1f25;">Web Optimization</div>
<div class="x" style="left:182.96px;top:275.08px;font-size:10.2px;line-height:16px;letter-spacing:-0.120px;color:#6a6d73;">6</div>
<div class="x" style="left:232.10px;top:274.06px;font-size:11.5px;line-height:16px;letter-spacing:-0.225px;color:#1d1f25;-webkit-text-stroke:0.25px #1d1f25;">UI Updates</div>
<div class="a" style="left:528px;top:274px;width:54.30px;height:15.00px;background:#cdebf8;border-radius:7.5px;"></div>
<div class="x" style="left:534.60px;top:274.06px;font-size:11.5px;line-height:16px;letter-spacing:-0.284px;color:#1d1f25;-webkit-text-stroke:0.25px #1d1f25;">Planned</div>
<div class="a" style="left:675px;top:272px;width:38.00px;height:18.00px;background:#e7ebfb;border-radius:3px;"></div>
<div class="x" style="left:678.80px;top:274.06px;font-size:11.5px;line-height:16px;letter-spacing:-0.256px;color:#1d1f25;-webkit-text-stroke:0.25px #1d1f25;">Q4 23</div>
<div class="a" style="left:824px;top:272px;width:123.50px;height:18.00px;background:#e7ebfb;border-radius:3px;"></div>
<div class="x" style="left:827.70px;top:274.06px;font-size:11.5px;line-height:16px;letter-spacing:-0.189px;color:#1d1f25;-webkit-text-stroke:0.25px #1d1f25;">iOS Mobile App Launch</div>
<div class="x" style="left:182.96px;top:301.58px;font-size:10.2px;line-height:16px;letter-spacing:-0.120px;color:#6a6d73;">7</div>
<div class="x" style="left:232.10px;top:300.56px;font-size:11.5px;line-height:16px;letter-spacing:-0.183px;color:#1d1f25;-webkit-text-stroke:0.25px #1d1f25;">Cover Image Support</div>
<div class="a" style="left:528px;top:300px;width:69.30px;height:15.00px;background:#d1defa;border-radius:7.5px;"></div>
<div class="x" style="left:534.60px;top:300.56px;font-size:11.5px;line-height:16px;letter-spacing:-0.202px;color:#1d1f25;-webkit-text-stroke:0.25px #1d1f25;">In progress</div>
<div class="a" style="left:675px;top:299px;width:37.00px;height:18.00px;background:#e7ebfb;border-radius:3px;"></div>
<div class="x" style="left:678.80px;top:300.56px;font-size:11.5px;line-height:16px;letter-spacing:-0.506px;color:#1d1f25;-webkit-text-stroke:0.25px #1d1f25;">Q1 23</div>
<div class="a" style="left:824px;top:299px;width:123.50px;height:18.00px;background:#e7ebfb;border-radius:3px;"></div>
<div class="x" style="left:827.70px;top:300.56px;font-size:11.5px;line-height:16px;letter-spacing:-0.189px;color:#1d1f25;-webkit-text-stroke:0.25px #1d1f25;">iOS Mobile App Launch</div>
<div class="x" style="left:182.96px;top:328.08px;font-size:10.2px;line-height:16px;letter-spacing:-0.120px;color:#6a6d73;">8</div>
<div class="x" style="left:232.10px;top:327.06px;font-size:11.5px;line-height:16px;letter-spacing:-0.040px;color:#1d1f25;-webkit-text-stroke:0.25px #1d1f25;">Onboarding Notifications</div>
<div class="x" style="left:389.60px;top:327.06px;font-size:11.5px;line-height:16px;letter-spacing:-0.054px;color:#1d1f25;-webkit-text-stroke:0.25px #1d1f25;">New notifications being...</div>
<div class="a" style="left:528px;top:327px;width:53.60px;height:15.00px;background:#fdd5de;border-radius:7.5px;"></div>
<div class="x" style="left:534.60px;top:327.06px;font-size:11.5px;line-height:16px;letter-spacing:-0.185px;color:#1d1f25;-webkit-text-stroke:0.25px #1d1f25;">Backlog</div>
<div class="a" style="left:675px;top:325px;width:38.00px;height:18.00px;background:#e7ebfb;border-radius:3px;"></div>
<div class="x" style="left:678.80px;top:327.06px;font-size:11.5px;line-height:16px;letter-spacing:-0.256px;color:#1d1f25;-webkit-text-stroke:0.25px #1d1f25;">Q3 23</div>
<div class="a" style="left:824px;top:325px;width:136.50px;height:18.00px;background:#e7ebfb;border-radius:3px;"></div>
<div class="x" style="left:827.70px;top:327.06px;font-size:11.5px;line-height:16px;letter-spacing:-0.191px;color:#1d1f25;-webkit-text-stroke:0.25px #1d1f25;">User Onboarding Updates</div>
<div class="x" style="left:182.96px;top:354.58px;font-size:10.2px;line-height:16px;letter-spacing:-0.120px;color:#6a6d73;">9</div>
<div class="x" style="left:232.10px;top:353.56px;font-size:11.5px;line-height:16px;letter-spacing:-0.119px;color:#1d1f25;-webkit-text-stroke:0.25px #1d1f25;">New Integrations</div>
<div class="a" style="left:528px;top:353px;width:69.30px;height:15.00px;background:#d1defa;border-radius:7.5px;"></div>
<div class="x" style="left:534.60px;top:353.56px;font-size:11.5px;line-height:16px;letter-spacing:-0.202px;color:#1d1f25;-webkit-text-stroke:0.25px #1d1f25;">In progress</div>
<div class="a" style="left:675px;top:352px;width:38.00px;height:18.00px;background:#e7ebfb;border-radius:3px;"></div>
<div class="x" style="left:678.80px;top:353.56px;font-size:11.5px;line-height:16px;letter-spacing:-0.256px;color:#1d1f25;-webkit-text-stroke:0.25px #1d1f25;">Q2 23</div>
<div class="a" style="left:824px;top:352px;width:76.20px;height:18.00px;background:#e7ebfb;border-radius:3px;"></div>
<div class="x" style="left:827.70px;top:353.56px;font-size:11.5px;line-height:16px;letter-spacing:-0.044px;color:#1d1f25;-webkit-text-stroke:0.25px #1d1f25;">Partner portal</div>
<div class="x" style="left:180.13px;top:381.08px;font-size:10.2px;line-height:16px;letter-spacing:-0.120px;color:#6a6d73;">10</div>
<div class="x" style="left:232.10px;top:380.06px;font-size:11.5px;line-height:16px;letter-spacing:-0.112px;color:#1d1f25;-webkit-text-stroke:0.25px #1d1f25;">Update Encryption Standar...</div>
<div class="a" style="left:528px;top:380px;width:69.30px;height:15.00px;background:#d1defa;border-radius:7.5px;"></div>
<div class="x" style="left:534.60px;top:380.06px;font-size:11.5px;line-height:16px;letter-spacing:-0.202px;color:#1d1f25;-webkit-text-stroke:0.25px #1d1f25;">In progress</div>
<div class="a" style="left:675px;top:378px;width:37.00px;height:18.00px;background:#e7ebfb;border-radius:3px;"></div>
<div class="x" style="left:678.80px;top:380.06px;font-size:11.5px;line-height:16px;letter-spacing:-0.506px;color:#1d1f25;-webkit-text-stroke:0.25px #1d1f25;">Q1 23</div>
<div class="a" style="left:824px;top:378px;width:98.50px;height:18.00px;background:#e7ebfb;border-radius:3px;"></div>
<div class="x" style="left:827.70px;top:380.06px;font-size:11.5px;line-height:16px;letter-spacing:-0.080px;color:#1d1f25;-webkit-text-stroke:0.25px #1d1f25;">Security upgrades</div>
<div class="x" style="left:180.51px;top:407.58px;font-size:10.2px;line-height:16px;letter-spacing:-0.120px;color:#6a6d73;">11</div>
<div class="x" style="left:232.10px;top:406.56px;font-size:11.5px;line-height:16px;letter-spacing:-0.105px;color:#1d1f25;-webkit-text-stroke:0.25px #1d1f25;">Admin Overage Notifications</div>
<div class="a" style="left:528px;top:406px;width:69.30px;height:15.00px;background:#d1defa;border-radius:7.5px;"></div>
<div class="x" style="left:534.60px;top:406.56px;font-size:11.5px;line-height:16px;letter-spacing:-0.202px;color:#1d1f25;-webkit-text-stroke:0.25px #1d1f25;">In progress</div>
<div class="a" style="left:675px;top:405px;width:38.00px;height:18.00px;background:#e7ebfb;border-radius:3px;"></div>
<div class="x" style="left:678.80px;top:406.56px;font-size:11.5px;line-height:16px;letter-spacing:-0.256px;color:#1d1f25;-webkit-text-stroke:0.25px #1d1f25;">Q2 23</div>
<div class="a" style="left:824px;top:405px;width:135.50px;height:18.00px;background:#e7ebfb;border-radius:3px;"></div>
<div class="x" style="left:827.70px;top:406.56px;font-size:11.5px;line-height:16px;letter-spacing:-0.236px;color:#1d1f25;-webkit-text-stroke:0.25px #1d1f25;">Revamped Admin Insights</div>
<div class="x" style="left:180.13px;top:434.08px;font-size:10.2px;line-height:16px;letter-spacing:-0.120px;color:#6a6d73;">12</div>
<div class="x" style="left:232.10px;top:433.06px;font-size:11.5px;line-height:16px;letter-spacing:-0.154px;color:#1d1f25;-webkit-text-stroke:0.25px #1d1f25;">SSO Configuration Options</div>
<div class="a" style="left:528px;top:433px;width:115.30px;height:15.00px;background:#fde8b3;border-radius:7.5px;"></div>
<div class="x" style="left:534.60px;top:433.06px;font-size:11.5px;line-height:16px;letter-spacing:-0.079px;color:#1d1f25;-webkit-text-stroke:0.25px #1d1f25;">Under consideration</div>
<div class="a" style="left:824px;top:431px;width:98.50px;height:18.00px;background:#e7ebfb;border-radius:3px;"></div>
<div class="x" style="left:827.70px;top:433.06px;font-size:11.5px;line-height:16px;letter-spacing:-0.080px;color:#1d1f25;-webkit-text-stroke:0.25px #1d1f25;">Security upgrades</div>
<div class="x" style="left:180.13px;top:460.58px;font-size:10.2px;line-height:16px;letter-spacing:-0.120px;color:#6a6d73;">13</div>
<div class="x" style="left:232.10px;top:459.56px;font-size:11.5px;line-height:16px;letter-spacing:-0.207px;color:#1d1f25;-webkit-text-stroke:0.25px #1d1f25;">Guided Onboarding Tasks</div>
<div class="a" style="left:528px;top:459px;width:69.30px;height:15.00px;background:#d1defa;border-radius:7.5px;"></div>
<div class="x" style="left:534.60px;top:459.56px;font-size:11.5px;line-height:16px;letter-spacing:-0.202px;color:#1d1f25;-webkit-text-stroke:0.25px #1d1f25;">In progress</div>
<div class="a" style="left:675px;top:458px;width:37.00px;height:18.00px;background:#e7ebfb;border-radius:3px;"></div>
<div class="x" style="left:678.80px;top:459.56px;font-size:11.5px;line-height:16px;letter-spacing:-0.506px;color:#1d1f25;-webkit-text-stroke:0.25px #1d1f25;">Q1 23</div>
<div class="a" style="left:824px;top:458px;width:136.50px;height:18.00px;background:#e7ebfb;border-radius:3px;"></div>
<div class="x" style="left:827.70px;top:459.56px;font-size:11.5px;line-height:16px;letter-spacing:-0.191px;color:#1d1f25;-webkit-text-stroke:0.25px #1d1f25;">User Onboarding Updates</div>
<div class="x" style="left:180.13px;top:487.08px;font-size:10.2px;line-height:16px;letter-spacing:-0.120px;color:#6a6d73;">14</div>
<div class="x" style="left:232.10px;top:486.06px;font-size:11.5px;line-height:16px;letter-spacing:-0.206px;color:#1d1f25;-webkit-text-stroke:0.25px #1d1f25;">Admin Dashboard Updates,...</div>
<div class="a" style="left:528px;top:486px;width:115.30px;height:15.00px;background:#fde8b3;border-radius:7.5px;"></div>
<div class="x" style="left:534.60px;top:486.06px;font-size:11.5px;line-height:16px;letter-spacing:-0.079px;color:#1d1f25;-webkit-text-stroke:0.25px #1d1f25;">Under consideration</div>
<div class="x" style="left:180.13px;top:513.58px;font-size:10.2px;line-height:16px;letter-spacing:-0.120px;color:#6a6d73;">15</div>
<div class="x" style="left:232.10px;top:512.56px;font-size:11.5px;line-height:16px;letter-spacing:-0.164px;color:#1d1f25;-webkit-text-stroke:0.25px #1d1f25;">Cover Image Support, Cust...</div>
<div class="a" style="left:528px;top:512px;width:53.60px;height:15.00px;background:#fdd5de;border-radius:7.5px;"></div>
<div class="x" style="left:534.60px;top:512.56px;font-size:11.5px;line-height:16px;letter-spacing:-0.185px;color:#1d1f25;-webkit-text-stroke:0.25px #1d1f25;">Backlog</div>
<svg class="a" style="left:180.95px;top:540.75px;" width="9.5" height="9.5" viewBox="0 0 9.5 9.5" fill="none" stroke="#5d6066" stroke-width="1.0" stroke-linecap="round" stroke-linejoin="round"><path d="M4.75 0V9.5M0 4.75H9.5"/></svg>
<div class="a" style="left:172px;top:709px;width:788.00px;height:11.00px;background:#fbfbfc;"></div>
<div class="a" style="left:172px;top:709px;width:788.00px;height:1.00px;background:#dfe1e4;"></div>
<div class="a" style="left:383px;top:709px;width:1.00px;height:11.00px;background:#cfd1d4;"></div>
<div class="x" style="left:177.40px;top:712.39px;font-size:10.5px;line-height:16px;letter-spacing:-0.383px;color:#1d1f25;">15 features</div>
<div class="a" style="left:178.3px;top:683.3px;width:110.00px;height:29.00px;background:#ffffff;border-radius:14.5px;border:1px solid #dcdee1;"></div>
<div class="a" style="left:215px;top:684px;width:1.00px;height:28.00px;background:#e3e5e8;"></div>
<svg class="a" style="left:193.95px;top:693.25px;" width="9.5" height="9.5" viewBox="0 0 9.5 9.5" fill="none" stroke="#3a3d43" stroke-width="1.0" stroke-linecap="round" stroke-linejoin="round"><path d="M4.75 0V9.5M0 4.75H9.5"/></svg>
<svg class="a" style="left:227.3px;top:692.5px;" width="11" height="11" viewBox="0 0 11 11" fill="none" stroke="#3a3d43" stroke-width="0.9" stroke-linecap="round" stroke-linejoin="round"><path d="M.8 10.200L7 4l1 1-6.200 6.200z"/><path d="M5.800 5.200l1 1"/><path d="M8.700.5v2M7.700 1.500h2M9.800 6.200v1.600M9 7h1.600M3.400 1.300v1.600M2.600 2.100h1.600" stroke-width=".8"/></svg>
<div class="x" style="left:246.10px;top:690.21px;font-size:11.5px;line-height:16px;letter-spacing:-0.209px;color:#1d1f25;">Add...</div>
</div>
</body>
</html>
